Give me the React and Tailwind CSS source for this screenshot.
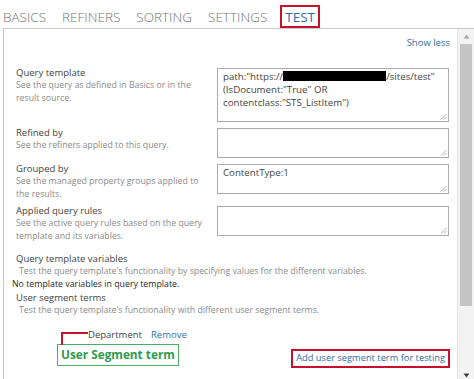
import React from "react";

const Grip = () => (
  <svg className="absolute right-[1px] bottom-[1px]" width="7" height="7" viewBox="0 0 7 7">
    <line x1="6.5" y1="1" x2="1" y2="6.5" stroke="#9a9a9a" strokeWidth="0.8" />
    <line x1="6.5" y1="4" x2="4" y2="6.5" stroke="#9a9a9a" strokeWidth="0.8" />
  </svg>
);

const Box = ({ h, children }) => (
  <div
    className={`relative w-[232px] shrink-0 border border-[#ababab] bg-white px-[5px] pt-[1px] text-[9.7px] leading-[13px] text-[#444] ${h}`}
  >
    {children}
    <Grip />
  </div>
);

const Field = ({ label, desc, h, children, className = "" }) => (
  <div className={`flex items-start ${className}`}>
    <div className="w-[201px] shrink-0 -mt-[1.5px] whitespace-nowrap">
      <div className="text-[9.5px] leading-[13px] text-[#444]">{label}</div>
      {desc.map((d) => (
        <div key={d} className="text-[8.75px] leading-[13px] text-[#8a8a8a]">
          {d}
        </div>
      ))}
    </div>
    <Box h={h}>{children}</Box>
  </div>
);

export default function App() {
  const tabs = ["BASICS", "REFINERS", "SORTING", "SETTINGS"];

  return (
    <div
      className="w-[474px] h-[379px] overflow-hidden bg-white flex flex-col"
      style={{ fontFamily: '"Open Sans", "Noto Sans", sans-serif' }}
    >
      {/* TABS */}
      <div className="h-[28px] shrink-0 flex items-end pl-[3px] gap-[16px] text-[13.5px] font-light text-[#737373]">
        {tabs.map((t) => (
          <span key={t} className="leading-[18px] mb-[2px]">
            {t}
          </span>
        ))}
        <span className="-ml-[3px] h-[23px] px-[3px] flex items-center border-2 border-[#c8102e] text-[#2f6ea6] font-normal leading-[18px]">
          TEST
        </span>
      </div>

      {/* PANEL */}
      <div className="flex-1 ml-[3px] flex border-t border-l border-[#c9c9c9] min-h-0">
        <div className="flex-1 min-w-0 pl-[12px] pr-[7px]">
          <div className="mt-[7px] text-right text-[9.5px] leading-[13px] text-[#2f6ea6]">
            Show less
          </div>

          <Field
            className="mt-[18.5px]"
            label="Query template"
            desc={["See the query as defined in Basics or in the", "result source."]}
            h="h-[54px]"
          >
            <div className="whitespace-nowrap flex items-center">
              path:"https://
              <span className="inline-block w-[103px] h-[10px] bg-black" />
              /sites/test"
            </div>
            <div>(IsDocument:"True" OR</div>
            <div>contentclass:"STS_ListItem")</div>
          </Field>

          <Field
            className="mt-[6px]"
            label="Refined by"
            desc={["See the refiners applied to this query."]}
            h="h-[30px]"
          />

          <Field
            className="mt-[6px]"
            label="Grouped by"
            desc={["See the managed property groups applied to", "the results."]}
            h="h-[30px]"
          >
            ContentType:1
          </Field>

          <Field
            className="mt-[4.5px]"
            label="Applied query rules"
            desc={["See the active query rules based on the query", "template and its variables."]}
            h="h-[30px]"
          />

          {/* VARIABLES */}
          <div className="mt-[9px] whitespace-nowrap">
            <div className="text-[9.5px] leading-[13px] text-[#444]">Query template variables</div>
            <div className="ml-[3px] text-[8.75px] leading-[13px] text-[#8a8a8a]">
              Test the query template's functionality by specifying values for the different variables.
            </div>
            <div className="-ml-[4px] text-[8.8px] leading-[13px] text-[#2a2a2a]">
              No template variables in query template.
            </div>
            <div className="text-[9.5px] leading-[13px] text-[#444]">User segment terms</div>
            <div className="ml-[3px] text-[8.75px] leading-[13px] text-[#8a8a8a]">
              Test the query template's functionality with different user segment terms.
            </div>
          </div>

          {/* USER SEGMENT */}
          <div className="relative mt-[11px] pl-[72px] flex gap-[9px] text-[9.5px] leading-[13px]">
            <span className="text-[#444]">Department</span>
            <span className="text-[#2f6ea6]">Remove</span>
            <span className="absolute left-[45px] top-[4px] w-[27px] h-[2px] bg-[#c8102e]" />
            <span className="absolute left-[45px] top-[4px] w-[2px] h-[13px] bg-[#c8102e]" />
          </div>

          <div className="flex items-start justify-between">
            <div className="ml-[41px] mt-[2.5px] h-[22px] px-[3px] flex items-center border border-[#4caf63] text-[11.8px] font-bold text-[#2e9b4e] whitespace-nowrap">
              User Segment term
            </div>
            <div className="mt-[7.5px] h-[19px] px-[3px] flex items-center border-2 border-[#c8102e] text-[9.3px] text-[#2f6ea6] whitespace-nowrap">
              Add user segment term for testing
            </div>
          </div>
        </div>

        {/* SCROLLBAR */}
        <div className="w-[17px] shrink-0 border-l border-[#e2e2e2] bg-[#f3f3f3] flex flex-col items-center">
          <svg className="mt-[5px]" width="7" height="5" viewBox="0 0 7 5">
            <path d="M3.5 0.5 L6.5 4.5 L0.5 4.5 Z" fill="#a8a8a8" />
          </svg>
          <div className="mt-[5px] w-[12px] h-[262px] bg-[#c4c4c4]" />
          <div className="flex-1" />
          <svg className="mb-[1px]" width="7" height="5" viewBox="0 0 7 5">
            <path d="M0.5 0.5 L6.5 0.5 L3.5 4.5 Z" fill="#444" />
          </svg>
        </div>
      </div>
    </div>
  );
}
